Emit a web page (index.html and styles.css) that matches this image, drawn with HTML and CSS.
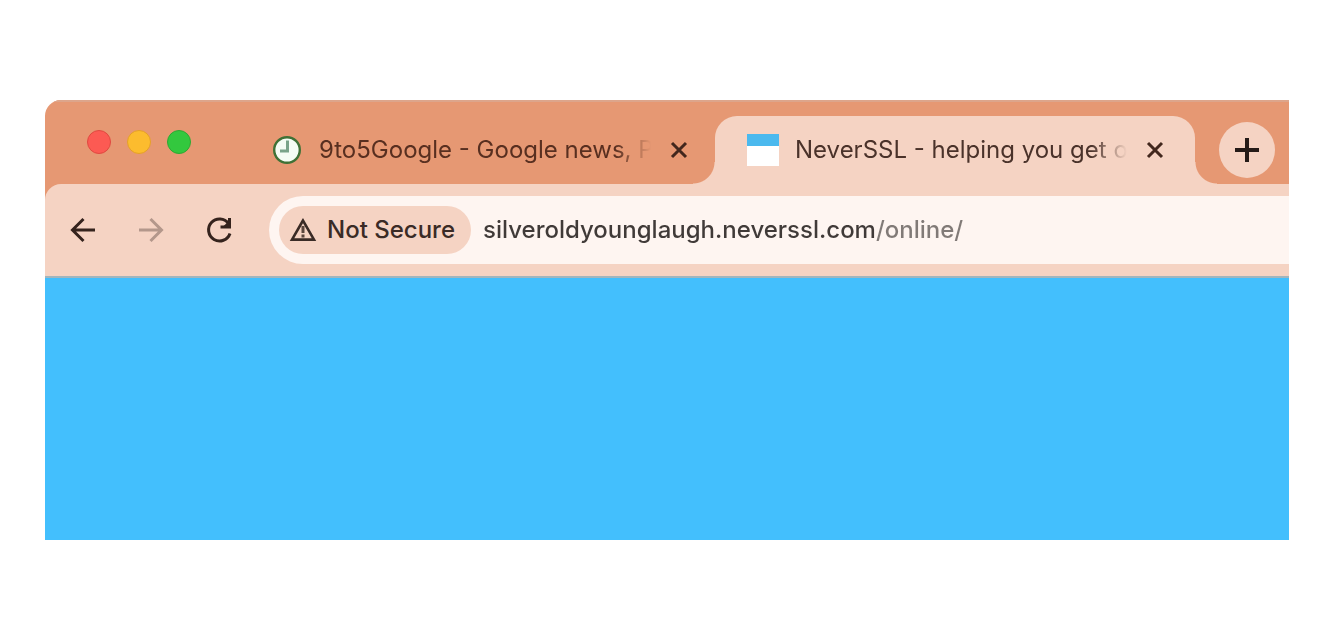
FILE: index.html
```html
<!DOCTYPE html>
<html lang="en">
<head>
<meta charset="utf-8">
<meta name="viewport" content="width=device-width, initial-scale=1">
<title>NeverSSL - helping you get online</title>
<link rel="stylesheet" href="styles.css">
</head>
<body>
<main class="window">
  <header class="tab-strip">
    <div class="lights">
      <button class="light light-close" aria-label="Close window"></button>
      <button class="light light-minimize" aria-label="Minimize window"></button>
      <button class="light light-zoom" aria-label="Zoom window"></button>
    </div>
    <div class="tab">
      <svg class="favicon-clock" viewBox="0 0 28 28" aria-hidden="true">
        <circle cx="14" cy="14" r="12.8" fill="#f4fcf4" stroke="#3f7136" stroke-width="2.4"/>
        <path d="M14.500 4.500v10.500H7" fill="none" stroke="#79a389" stroke-width="3"/>
      </svg>
      <span class="tab-title">9to5Google - Google news, P</span>
      <button class="tab-close" aria-label="Close tab">
        <svg viewBox="0 0 24 24" aria-hidden="true"><path d="M5 5l14 14M19 5L5 19"/></svg>
      </button>
    </div>
    <div class="tab tab-active">
      <svg class="favicon-page" viewBox="0 0 32 32" aria-hidden="true">
        <path fill="#fff" d="M0 0h32v32H0z"/>
        <path fill="#4bb9ee" d="M0 0h32v12H0z"/>
      </svg>
      <span class="tab-title">NeverSSL - helping you get o</span>
      <button class="tab-close" aria-label="Close tab">
        <svg viewBox="0 0 24 24" aria-hidden="true"><path d="M5 5l14 14M19 5L5 19"/></svg>
      </button>
    </div>
    <button class="new-tab" aria-label="New tab">
      <svg viewBox="0 0 24 24" aria-hidden="true"><path d="M12 0v24M0 12h24"/></svg>
    </button>
  </header>
  <nav class="toolbar">
    <button class="nav-button" aria-label="Back">
      <svg viewBox="0 0 28 28" aria-hidden="true"><path d="M26 14H4M14.5 3L3.5 14l11 11"/></svg>
    </button>
    <button class="nav-button nav-forward" aria-label="Forward" disabled>
      <svg viewBox="0 0 28 28" aria-hidden="true"><path d="M2 14h22M13.500 3l11 11-11 11"/></svg>
    </button>
    <button class="nav-button" aria-label="Reload">
      <svg viewBox="0 0 28 28" aria-hidden="true">
        <path d="M23.500 7.500A11 11 0 1 0 25 17.500"/>
        <path d="M24.500 2v9h-9"/>
        <path class="solid" d="M25 4v7.500h-8z"/>
      </svg>
    </button>
    <div class="omnibox">
      <button class="chip">
        <svg viewBox="0 0 28 26" aria-hidden="true">
          <path d="M14 3.500L3 22.600h22z" fill="none" stroke="#3a2b26" stroke-width="2.600"/>
          <path d="M14 9v7M14 17.500v3" fill="none" stroke="#5a463e" stroke-width="3"/>
        </svg>
        Not Secure
      </button>
      <input class="address" type="text" aria-label="Address" spellcheck="false" value="silveroldyounglaugh.neverssl.com/online/">
    </div>
  </nav>
  <section class="page" aria-label="Page content"></section>
</main>
</body>
</html>
```
FILE: styles.css
```css
* {
  box-sizing: border-box;
}

body {
  display: flex;
  min-height: 100vh;
  margin: 0;
  padding: 100px 51px 98px 45px;
  background: #fff;
  color: #3a2b26;
  font-family: Inter, "Liberation Sans", sans-serif;
  font-size: 24px;
  line-height: 32px;
}

button {
  display: flex;
  align-items: center;
  justify-content: center;
  flex: none;
  margin: 0;
  padding: 0;
  border: 0;
  background: none;
  color: inherit;
  font: inherit;
}

svg {
  display: block;
  flex: none;
}

.window {
  display: flex;
  flex: 1;
  flex-direction: column;
  min-width: 0;
  overflow: hidden;
  border-top-left-radius: 16px;
  background: #e69873;
}

.tab-strip {
  display: flex;
  padding-top: 16px;
  box-shadow: inset 0 2px #dda58b;
}

.lights {
  display: flex;
  gap: 16px;
  padding: 14px 64px 0 42px;
}

.light {
  width: 24px;
  height: 24px;
  border: 1px solid;
  border-radius: 50%;
}

.light-close {
  border-color: #e04940;
  background: #fc5a53;
}

.light-minimize {
  border-color: #e5a029;
  background: #fcbc2e;
}

.light-zoom {
  border-color: #2fa833;
  background: #33c83e;
}

.tab {
  position: relative;
  display: flex;
  flex: 418 1 0;
  align-items: center;
  min-width: 0;
  height: 68px;
  padding: 0 24px 0 18px;
  color: #582f20;
}

.tab-active {
  flex-grow: 420;
  padding: 0 28px 0 32px;
  border-radius: 22px 22px 0 0;
  background: #f5d3c3;
  color: #4a322a;
}

.tab-active::before,
.tab-active::after {
  position: absolute;
  bottom: 0;
  width: 22px;
  height: 22px;
  content: "";
}

.tab-active::before {
  right: 100%;
  background: radial-gradient(circle at 0 0, transparent 21px, #f5d3c3 22px);
}

.tab-active::after {
  left: 100%;
  background: radial-gradient(circle at 100% 0, transparent 21px, #f5d3c3 22px);
}

.favicon-clock {
  width: 28px;
  height: 28px;
  margin-right: 18px;
}

.favicon-page {
  width: 32px;
  height: 32px;
  margin-right: 16px;
}

.tab-title {
  flex: 1;
  min-width: 0;
  margin-right: 12px;
  white-space: nowrap;
  mask-image: linear-gradient(to left, transparent 4px, #000 40px);
}

.tab-close svg {
  width: 24px;
  height: 24px;
  fill: none;
  stroke: #42271d;
  stroke-width: 3;
}

.new-tab {
  width: 56px;
  height: 56px;
  margin: 6px 14px 0 24px;
  border-radius: 50%;
  background: #f5d3c3;
}

.new-tab svg {
  width: 24px;
  height: 24px;
  fill: none;
  stroke: #251b18;
  stroke-width: 4;
}

.toolbar {
  display: flex;
  align-items: center;
  gap: 40px;
  padding: 12px 0 12px 24px;
  border-bottom: 2px solid #a2b5bd;
  border-top-left-radius: 16px;
  background: #f5d3c3;
}

.nav-button svg {
  width: 28px;
  height: 28px;
  fill: none;
  stroke: #35231d;
  stroke-width: 3;
}

.nav-button .solid {
  fill: #35231d;
  stroke: none;
}

.nav-forward svg {
  stroke: #b3978b;
}

.omnibox {
  display: flex;
  flex: 1;
  align-items: center;
  gap: 12px;
  min-width: 0;
  margin-left: -4px;
  padding: 10px;
  padding-right: 0;
  border-radius: 34px 0 0 34px;
  background: #fef5f1;
}

.chip {
  gap: 10px;
  height: 48px;
  padding: 0 16px 0 10px;
  border-radius: 24px;
  background: #f5d3c3;
  font-weight: 500;
}

.chip svg {
  width: 28px;
  height: 26px;
}

.address {
  flex: 1;
  min-width: 0;
  height: 48px;
  padding: 0 0 2px;
  border: 0;
  outline: 0;
  background: linear-gradient(to right, #403a38 393px, #817a77 393px);
  background-clip: text;
  color: transparent;
  font: inherit;
  font-weight: 500;
}

.page {
  flex: 1;
  background: #43bffd;
}
```
